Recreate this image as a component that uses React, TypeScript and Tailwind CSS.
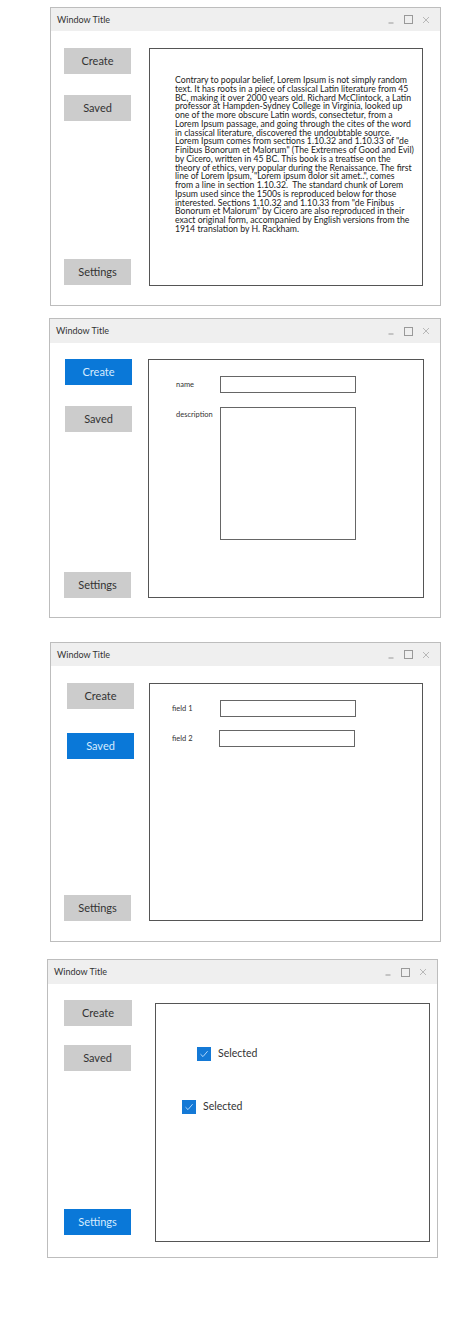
import React from "react"

const font = { fontFamily: "Lato, 'Noto Sans', sans-serif" }

const lorem = [
  "Contrary to popular belief, Lorem Ipsum is not simply random",
  "text. It has roots in a piece of classical Latin literature from 45",
  "BC, making it over 2000 years old. Richard McClintock, a Latin",
  "professor at Hampden-Sydney College in Virginia, looked up",
  "one of the more obscure Latin words, consectetur, from a",
  "Lorem Ipsum passage, and going through the cites of the word",
  "in classical literature, discovered the undoubtable source.",
  "Lorem Ipsum comes from sections 1.10.32 and 1.10.33 of \"de",
  "Finibus Bonorum et Malorum\" (The Extremes of Good and Evil)",
  "by Cicero, written in 45 BC. This book is a treatise on the",
  "theory of ethics, very popular during the Renaissance. The first",
  "line of Lorem Ipsum, \"Lorem ipsum dolor sit amet..\", comes",
  "from a line in section 1.10.32.  The standard chunk of Lorem",
  "Ipsum used since the 1500s is reproduced below for those",
  "interested. Sections 1.10.32 and 1.10.33 from \"de Finibus",
  "Bonorum et Malorum\" by Cicero are also reproduced in their",
  "exact original form, accompanied by English versions from the",
  "1914 translation by H. Rackham.",
]

const TitleBar = ({ h }: { h: string }) => (
  <div className={`flex items-center justify-between bg-[#efefef] pl-[6px] pr-[10px] ${h}`}>
    <span className="text-[9px] text-[#333]">Window Title</span>
    <div className="flex items-center gap-[9px]">
      <svg width="8" height="8" viewBox="0 0 8 8">
        <line x1="1.5" y1="7" x2="6.5" y2="7" stroke="#999" strokeWidth="1" />
      </svg>
      <svg width="9" height="9" viewBox="0 0 9 9">
        <rect x="0.5" y="0.5" width="8" height="8" fill="none" stroke="#999" strokeWidth="1" />
      </svg>
      <svg width="8" height="8" viewBox="0 0 8 8">
        <path d="M1 1L7 7M7 1L1 7" stroke="#aaa" strokeWidth="0.8" />
      </svg>
    </div>
  </div>
)

const NavButton = ({ label, active, className = "" }: { label: string; active?: boolean; className?: string }) => (
  <div
    className={`flex h-[26px] w-[67px] items-center justify-center text-[11px] ${
      active ? "bg-[#0a78d8] text-[#d6ecff]" : "bg-[#cccccc] text-[#333]"
    } ${className}`}
  >
    {label}
  </div>
)

const Checkbox = ({ className = "" }: { className?: string }) => (
  <div className={`flex items-center gap-[7px] ${className}`}>
    <div className="flex h-[14px] w-[14px] items-center justify-center bg-[#1479d6]">
      <svg width="10" height="10" viewBox="0 0 10 10">
        <path d="M1.5 5.2L4 7.6L8.6 2.2" fill="none" stroke="#bfe0ff" strokeWidth="0.9" />
      </svg>
    </div>
    <span className="text-[10.5px] text-[#333]">Selected</span>
  </div>
)

const Field = ({ label, labelW, className = "", inputClass = "" }: { label: string; labelW: string; className?: string; inputClass?: string }) => (
  <div className={`flex items-center ${className}`}>
    <span className={`text-[7.5px] text-[#333] ${labelW}`}>{label}</span>
    <div className={`h-[17px] w-[136px] border border-[#666] bg-white ${inputClass}`} />
  </div>
)

export default function App() {
  return (
    <div className="min-h-[1333px] w-[474px] bg-white pb-[76px]" style={font}>
      {/* 1: text */}
      <div className="ml-[50px] pt-[7px]">
        <div className="flex h-[299px] w-[391px] flex-col border border-[#bdbdbd]">
          <TitleBar h="h-[23px]" />
          <div className="flex flex-1 gap-[18px] pb-[19px] pl-[13px] pr-[17px] pt-[17px]">
            <div className="flex flex-col pb-[1px]">
              <NavButton label="Create" />
              <NavButton label="Saved" className="mt-[21px]" />
              <NavButton label="Settings" className="mt-auto" />
            </div>
            <div className="flex-1 border border-[#555] pl-[25px] pt-[27px]">
              <div className="text-[8.7px] leading-[8.75px] text-[#222]">
                {lorem.map((line, i) => (
                  <div key={i} className="whitespace-pre">{line}</div>
                ))}
              </div>
            </div>
          </div>
        </div>
      </div>

      {/* 2: create */}
      <div className="ml-[49px] mt-[12px]">
        <div className="flex h-[300px] w-[392px] flex-col border border-[#bdbdbd]">
          <TitleBar h="h-[24px]" />
          <div className="flex flex-1 gap-[16px] pb-[19px] pl-[14px] pr-[16px] pt-[16px]">
            <div className="flex flex-col">
              <NavButton label="Create" active className="ml-[1px]" />
              <NavButton label="Saved" className="ml-[1px] mt-[21px]" />
              <NavButton label="Settings" className="mt-auto" />
            </div>
            <div className="flex-1 border border-[#555] pl-[27px] pt-[16px]">
              <Field label="name" labelW="w-[44px]" />
              <div className="mt-[14px] flex items-start">
                <span className="mt-[2px] w-[44px] text-[7.5px] text-[#333]">description</span>
                <div className="h-[133px] w-[136px] border border-[#666]" />
              </div>
            </div>
          </div>
        </div>
      </div>

      {/* 3: saved */}
      <div className="ml-[50px] mt-[24px]">
        <div className="flex h-[300px] w-[391px] flex-col border border-[#bdbdbd]">
          <TitleBar h="h-[23px]" />
          <div className="flex flex-1 gap-[15px] pb-[20px] pl-[13px] pr-[17px] pt-[17px]">
            <div className="flex flex-col">
              <NavButton label="Create" className="ml-[3px]" />
              <NavButton label="Saved" active className="ml-[3px] mt-[24px]" />
              <NavButton label="Settings" className="mt-auto" />
            </div>
            <div className="flex-1 border border-[#555] pl-[22px] pt-[16px]">
              <Field label="field 1" labelW="w-[48px]" />
              <Field label="field 2" labelW="w-[47px]" className="mt-[13px]" />
            </div>
          </div>
        </div>
      </div>

      {/* 4: settings */}
      <div className="ml-[47px] mt-[17px]">
        <div className="flex h-[299px] w-[391px] flex-col border border-[#bdbdbd]">
          <TitleBar h="h-[24px]" />
          <div className="flex flex-1 gap-[23px] pb-[15px] pl-[16px] pr-[7px] pt-[16px]">
            <div className="flex flex-col pb-[7px]">
              <NavButton label="Create" className="w-[68px]" />
              <NavButton label="Saved" className="mt-[19px]" />
              <NavButton label="Settings" active className="mt-auto" />
            </div>
            <div className="mt-[3px] flex-1 border border-[#555] pt-[42px]">
              <Checkbox className="ml-[41px]" />
              <Checkbox className="ml-[26px] mt-[37px]" />
            </div>
          </div>
        </div>
      </div>
    </div>
  )
}
